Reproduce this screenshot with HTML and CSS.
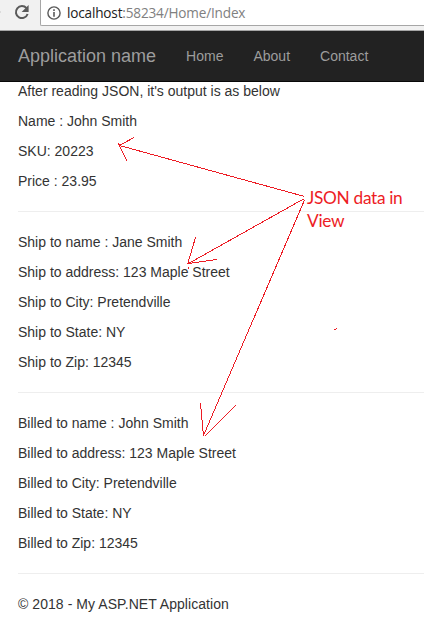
FILE: index.html
```
<!DOCTYPE html>
<html lang="en">
<head>
<meta charset="utf-8">
<title>Index - My ASP.NET Application</title>
<link rel="stylesheet" href="styles.css">
</head>
<body>
<header class="toolbar">
  <svg class="reload" width="40" height="25" viewBox="0 0 40 25">
    <path d="M0 11.5h1v1H0z" fill="#c8c8c8"/>
    <path d="M26.5 8.2A6 6 0 1 0 27.6 14" fill="none" stroke="#5a5a5a" stroke-width="2"/>
    <path d="M28.6 5v7h-7z" fill="#5a5a5a"/>
  </svg>
  <div class="address">
    <svg class="info" width="14" height="14" viewBox="0 0 14 14">
      <circle cx="7" cy="7" r="6.1" fill="none" stroke="#5a5a5a" stroke-width="1.4"/>
      <path d="M6.2 3.3h1.6v1.6H6.2zM6.2 6h1.6v4.7H6.2z" fill="#5a5a5a"/>
    </svg>
    <span class="url"><b>localhost</b>:58234/Home/Index</span>
  </div>
</header>
<nav class="navbar">
  <a class="brand">Application name</a>
  <a>Home</a>
  <a>About</a>
  <a>Contact</a>
</nav>
<main>
  <p>After reading JSON, it's output is as below</p>
  <p>Name : John Smith</p>
  <p>SKU: 20223</p>
  <p>Price : 23.95</p>
  <hr>
  <p>Ship to name : Jane Smith</p>
  <p>Ship to address: 123 Maple Street</p>
  <p>Ship to City: Pretendville</p>
  <p>Ship to State: NY</p>
  <p>Ship to Zip: 12345</p>
  <hr>
  <p>Billed to name : John Smith</p>
  <p>Billed to address: 123 Maple Street</p>
  <p>Billed to City: Pretendville</p>
  <p>Billed to State: NY</p>
  <p>Billed to Zip: 12345</p>
  <hr>
  <footer><p>© 2018 - My ASP.NET Application</p></footer>
</main>
<svg class="arrows" width="426" height="617" viewBox="0 0 426 617">
  <path d="M304.500 196.500L119.500 145.500M134 137.500L119.500 145.500M118.500 143.500L127 161M303.500 199L188.500 263.500M195.500 237.500L187.500 264.500M188.500 263.500L217 259.500M188.500 267v2M304.500 200L203.500 435.500M200.500 403L203.500 436M236 405L205 436M334 329.500h2M336 328.500h1"/>
</svg>
<div class="note">JSON data in<br>View</div>
</body>
</html>
```
FILE: styles.css
```
* { box-sizing: border-box; }
html { overflow: hidden; background: #fff; }
body {
  margin: 0;
  width: 424px;
  height: 617px;
  overflow: hidden;
  color: #333;
  font: 14px/20px "Liberation Sans", Arial, sans-serif;
}
.toolbar {
  display: flex;
  height: 31px;
  background: #f1f1f1;
  border-bottom: 1px solid #a6a6a6;
}
.reload { flex: none; }
.address {
  display: flex;
  align-items: center;
  gap: 6px;
  flex: 1;
  height: 26px;
  padding-left: 6px;
  background: #fff;
  border-left: 1px solid #a6a6a6;
  border-bottom: 1px solid #a6a6a6;
  border-bottom-left-radius: 2px;
}
.url {
  font-family: "Open Sans", "Noto Sans", sans-serif;
  font-size: 13.6px;
  letter-spacing: -0.18px;
  white-space: nowrap;
  color: #808080;
}
.url b { font-weight: 400; color: #222; }
.navbar {
  display: flex;
  align-items: center;
  height: 51px;
  padding-left: 3px;
  background: #222;
  border-bottom: 1px solid #080808;
  color: #9d9d9d;
}
.navbar a { padding: 0 15px; }
.navbar .brand { font-size: 18px; }
main { margin-top: -1px; padding-left: 18px; }
p { margin: 0 0 10px; }
hr { margin: 20px 0; border: 0; border-top: 1px solid #eee; }
footer { letter-spacing: 0.06px; }
.arrows {
  position: absolute;
  left: 0;
  top: 0;
  fill: none;
  stroke: #ed1c24;
  stroke-width: 1;
  shape-rendering: crispEdges;
}
.note {
  position: absolute;
  left: 307px;
  top: 186px;
  color: #ed1c24;
  font: 17.3px/23px Lato, sans-serif;
  letter-spacing: -0.32px;
  white-space: nowrap;
}
```
